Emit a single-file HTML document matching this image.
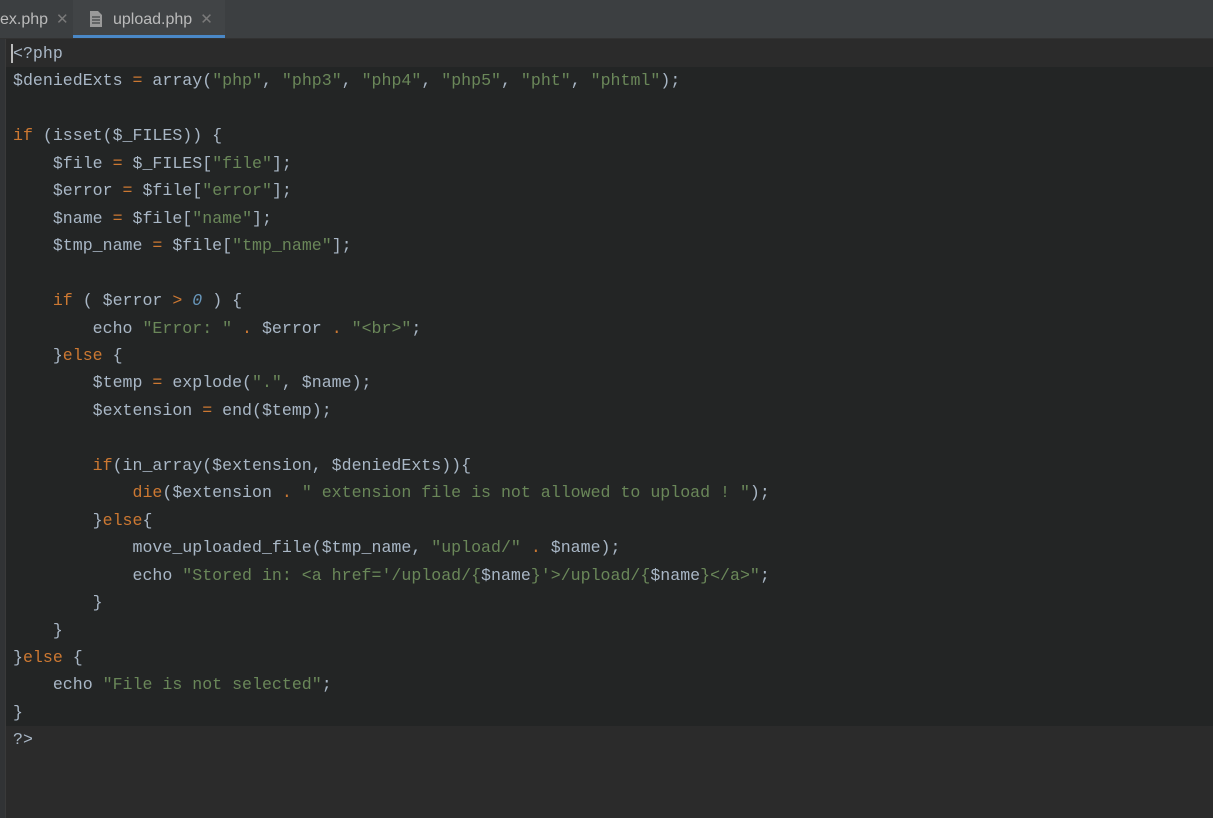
<!DOCTYPE html>
<html><head><meta charset="utf-8"><style>
html,body{margin:0;padding:0;}
body{width:1213px;height:818px;background:#2b2b2b;position:relative;overflow:hidden;font-family:"Liberation Mono",monospace;}
.tabs{position:absolute;left:0;top:0;width:1213px;height:38px;background:#3c3f41;border-bottom:1px solid #323232;font-family:"Liberation Sans",sans-serif;font-size:16px;color:#bbbbbb;}
.tab{position:absolute;top:0;height:38px;line-height:40px;}
.x{color:#7a7a7a;margin-left:8px;font-size:15px;}
.act{left:73px;width:152px;background:#414446;}
.act:after{content:"";position:absolute;left:0;right:0;bottom:0;height:3px;background:#4a88c7;}
.gut{position:absolute;left:0;top:39px;width:5px;height:779px;background:#313335;border-right:1px solid #3a3a3a;}
.php{position:absolute;left:6px;top:67px;width:1207px;height:659px;background:#232525;}
.code{position:absolute;left:13px;top:40px;font-size:16.6px;line-height:27.45px;color:#a9b7c6;white-space:pre;}
.k{color:#cc7832}.s{color:#6a8759}.n{color:#6897bb;font-style:italic}
.cur{border-left:2px solid #bbbbbb;margin-left:-2px}
</style></head><body>
<div class="tabs">
<div class="tab" style="left:0">ex.php<span class="x">✕</span></div>
<div class="tab act"><svg style="position:absolute;left:17px;top:11px" width="12" height="16" viewBox="0 0 12 16"><path d="M0 0h8l4 4v12H0z" fill="#9a9a9a"/><path d="M2 6h8M2 9h8M2 12h8" stroke="#414446" stroke-width="1.3"/></svg><span style="margin-left:40px">upload.php</span><span class="x">✕</span></div>
</div>
<div class="gut"></div>
<div class="php"></div>
<div class="code"><span class="cur"></span>&lt;?php
$deniedExts <span class="k">=</span> array(<span class="s">"php"</span>, <span class="s">"php3"</span>, <span class="s">"php4"</span>, <span class="s">"php5"</span>, <span class="s">"pht"</span>, <span class="s">"phtml"</span>);

<span class="k">if</span> (isset($_FILES)) {
    $file <span class="k">=</span> $_FILES[<span class="s">"file"</span>];
    $error <span class="k">=</span> $file[<span class="s">"error"</span>];
    $name <span class="k">=</span> $file[<span class="s">"name"</span>];
    $tmp_name <span class="k">=</span> $file[<span class="s">"tmp_name"</span>];

    <span class="k">if</span> ( $error <span class="k">&gt;</span> <span class="n">0</span> ) {
        echo <span class="s">"Error: "</span> <span class="k">.</span> $error <span class="k">.</span> <span class="s">"&lt;br&gt;"</span>;
    }<span class="k">else</span> {
        $temp <span class="k">=</span> explode(<span class="s">"."</span>, $name);
        $extension <span class="k">=</span> end($temp);

        <span class="k">if</span>(in_array($extension, $deniedExts)){
            <span class="k">die</span>($extension <span class="k">.</span> <span class="s">" extension file is not allowed to upload ! "</span>);
        }<span class="k">else</span>{
            move_uploaded_file($tmp_name, <span class="s">"upload/"</span> <span class="k">.</span> $name);
            echo <span class="s">"Stored in: &lt;a href='/upload/{</span>$name<span class="s">}'&gt;/upload/{</span>$name<span class="s">}&lt;/a&gt;"</span>;
        }
    }
}<span class="k">else</span> {
    echo <span class="s">"File is not selected"</span>;
}
?&gt;</div>
</body></html>
